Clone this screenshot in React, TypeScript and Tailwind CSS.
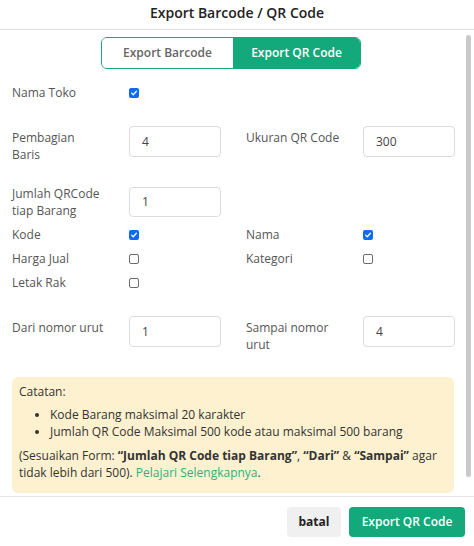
import type { ReactNode } from 'react';

const font = { fontFamily: '"Open Sans", "Liberation Sans", sans-serif' };

function Check({ on }: { on?: boolean }) {
  if (on)
    return (
      <span className="flex h-[10px] w-[10px] items-center justify-center rounded-[2px] bg-[#0b6cf0]">
        <svg viewBox="0 0 10 10" className="h-[8px] w-[8px]">
          <path d="M2 5.2 4.1 7.2 8 2.8" fill="none" stroke="white" strokeWidth="1.6" strokeLinecap="round" strokeLinejoin="round" />
        </svg>
      </span>
    );
  return <span className="block h-[10px] w-[10px] rounded-[2px] border border-[#6b6b6b] bg-white" />;
}

function Field({ value }: { value: string }) {
  return (
    <div className="flex h-full w-[92px] items-center rounded-[4px] border border-[#dcdcdc] bg-white px-[12px] text-[12px] text-[#444]">
      {value}
    </div>
  );
}

function Cell({ label, children, first, labelClass = 'mt-[3px]' }: { label: ReactNode; children?: ReactNode; first?: boolean; labelClass?: string }) {
  return (
    <div className={`flex h-full items-start ${first ? 'w-[234px] shrink-0' : 'flex-1'}`}>
      <div className={`w-[117px] shrink-0 pr-2 text-[12px] leading-[17px] text-[#555] ${labelClass}`}>{label}</div>
      {children}
    </div>
  );
}

function CheckCell({ label, on, first }: { label?: string; on?: boolean; first?: boolean }) {
  return (
    <div className={`flex h-[16px] items-center ${first ? 'w-[234px] shrink-0' : 'flex-1'}`}>
      <div className="w-[117px] shrink-0 text-[12px] leading-[16px] text-[#555]">{label}</div>
      {label && <Check on={on} />}
    </div>
  );
}

export default function App() {
  return (
    <div style={font} className="relative flex h-[546px] w-[474px] flex-col bg-white text-[#333]">
      <div className="flex h-[30px] shrink-0 items-center justify-center border-b border-[#dedede] pb-[4px] text-[14px] font-semibold text-[#222]">
        Export Barcode / QR Code
      </div>

      <div className="relative flex-1 overflow-hidden pl-[12px] pr-[20px]">
        <div className="absolute right-[3px] top-[5px] h-[442px] w-[5px] rounded-sm bg-[#c9c9c9]" />

        <div className="mt-[7px] flex w-[438px] justify-center">
          <div className="flex h-[32px] w-[260px] overflow-hidden rounded-[6px] border border-[#13a97a] text-[12px] font-semibold">
            <div className="flex flex-1 items-center justify-center bg-white text-[#666]">Export Barcode</div>
            <div className="flex w-[127px] items-center justify-center bg-[#13a97a] text-white">Export QR Code</div>
          </div>
        </div>

        <div className="mt-[16px] flex">
          <CheckCell label="Nama Toko" on first />
        </div>

        <div className="mt-[25px] flex h-[31px]">
          <Cell label={<>Pembagian<br />Baris</>} first>
            <Field value="4" />
          </Cell>
          <Cell label="Ukuran QR Code">
            <Field value="300" />
          </Cell>
        </div>

        <div className="mt-[30px] flex h-[30px]">
          <Cell label={<>Jumlah QRCode<br />tiap Barang</>} labelClass="mt-[-2px]" first>
            <Field value="1" />
          </Cell>
        </div>

        <div className="mt-[10px] flex flex-col gap-[8px]">
          <div className="flex">
            <CheckCell label="Kode" on first />
            <CheckCell label="Nama" on />
          </div>
          <div className="flex">
            <CheckCell label="Harga Jual" first />
            <CheckCell label="Kategori" />
          </div>
          <div className="flex">
            <CheckCell label="Letak Rak" first />
          </div>
        </div>

        <div className="mt-[25px] flex h-[31px]">
          <Cell label="Dari nomor urut" first>
            <Field value="1" />
          </Cell>
          <Cell label={<>Sampai nomor<br />urut</>}>
            <Field value="4" />
          </Cell>
        </div>

        <div className="mt-[30px] w-[442px] rounded-[6px] bg-[#fdf1cf] px-[7px] pb-[12px] pt-[6px] text-[12px] leading-[17px] text-[#333]">
          <div>Catatan:</div>
          <ul className="mt-[6px] list-disc pl-[31px]">
            <li>Kode Barang maksimal 20 karakter</li>
            <li>Jumlah QR Code Maksimal 500 kode atau maksimal 500 barang</li>
          </ul>
          <p className="mt-[7px]">
            (Sesuaikan Form: <b>“Jumlah QR Code tiap Barang”</b>, <b>“Dari”</b> &amp; <b>“Sampai”</b> agar tidak lebih dari
            500). <span className="text-[#2fae7f]">Pelajari Selengkapnya</span>.
          </p>
        </div>
      </div>

      <div className="flex h-[50px] shrink-0 items-center justify-end gap-[8px] border-t border-[#e5e5e5] pr-[9px]">
        <button className="h-[30px] w-[54px] rounded-[4px] bg-[#f0f0f0] text-[12px] font-bold text-[#222]">batal</button>
        <button className="h-[30px] w-[116px] rounded-[4px] bg-[#13a97a] text-[12px] font-semibold text-white">Export QR Code</button>
      </div>
    </div>
  );
}
